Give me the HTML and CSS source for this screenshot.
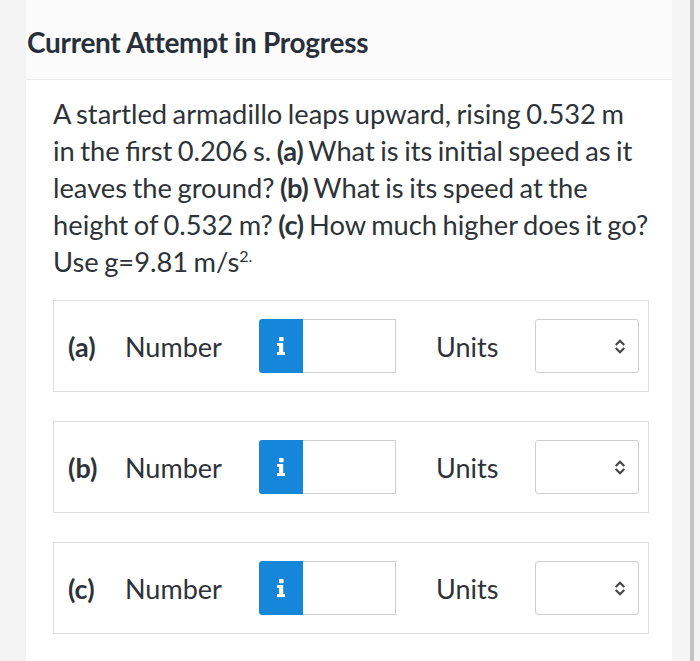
FILE: index.html
```html
<!DOCTYPE html>
<html lang="en">
<head>
<meta charset="utf-8">
<title>Current Attempt in Progress</title>
<link rel="stylesheet" href="styles.css">
</head>
<body>
<div class="page">
  <div class="gutter-left"></div>
  <main class="panel">
    <header class="header">
      <h1 class="title">Current Attempt in Progress</h1>
    </header>
    <section class="body">
      <p class="question">A startled armadillo leaps upward, rising 0.532 m<br>in the first 0.206 s. <b>(a)</b> What is its initial speed as it<br>leaves the ground? <b>(b)</b> What is its speed at the<br>height of 0.532 m? <b>(c)</b> How much higher does it go?<br>Use <span class="var">g</span>=9.81 m/s<sup class="sup">2.</sup></p>

      <div class="answer">
        <span class="part">(a)</span>
        <span class="num-label">Number</span>
        <div class="field">
          <span class="info"><svg class="info-icon" viewBox="0 0 10 18" width="10" height="18"><rect x="3" y="0" width="4.6" height="4.2" rx="1" fill="#fff"/><path d="M1 6H7.2V15H9V18H1V15H3V9H1Z" fill="#fff"/></svg></span>
          <span class="num-input"></span>
        </div>
        <span class="units-label">Units</span>
        <span class="select"><svg class="chev" viewBox="0 0 14 18" width="14" height="17"><polyline points="2.5,7.5 7,3 11.5,7.5" fill="none" stroke="#444" stroke-width="2.2"/><polyline points="2.5,10.5 7,15 11.5,10.5" fill="none" stroke="#444" stroke-width="2.2"/></svg></span>
      </div>

      <div class="answer">
        <span class="part">(b)</span>
        <span class="num-label">Number</span>
        <div class="field">
          <span class="info"><svg class="info-icon" viewBox="0 0 10 18" width="10" height="18"><rect x="3" y="0" width="4.6" height="4.2" rx="1" fill="#fff"/><path d="M1 6H7.2V15H9V18H1V15H3V9H1Z" fill="#fff"/></svg></span>
          <span class="num-input"></span>
        </div>
        <span class="units-label">Units</span>
        <span class="select"><svg class="chev" viewBox="0 0 14 18" width="14" height="17"><polyline points="2.5,7.5 7,3 11.5,7.5" fill="none" stroke="#444" stroke-width="2.2"/><polyline points="2.5,10.5 7,15 11.5,10.5" fill="none" stroke="#444" stroke-width="2.2"/></svg></span>
      </div>

      <div class="answer">
        <span class="part">(c)</span>
        <span class="num-label">Number</span>
        <div class="field">
          <span class="info"><svg class="info-icon" viewBox="0 0 10 18" width="10" height="18"><rect x="3" y="0" width="4.6" height="4.2" rx="1" fill="#fff"/><path d="M1 6H7.2V15H9V18H1V15H3V9H1Z" fill="#fff"/></svg></span>
          <span class="num-input"></span>
        </div>
        <span class="units-label">Units</span>
        <span class="select"><svg class="chev" viewBox="0 0 14 18" width="14" height="17"><polyline points="2.5,7.5 7,3 11.5,7.5" fill="none" stroke="#444" stroke-width="2.2"/><polyline points="2.5,10.5 7,15 11.5,10.5" fill="none" stroke="#444" stroke-width="2.2"/></svg></span>
      </div>
    </section>
  </main>
  <div class="gutter-right"></div>
  <div class="scrollbar"></div>
  <div class="edge"></div>
</div>
</body>
</html>
```
FILE: styles.css
```css
* { box-sizing: border-box; }
html, body { margin: 0; padding: 0; }
body {
  font-family: Lato, "Open Sans", Arial, sans-serif;
  color: #2d3338;
  background: #f3f3f3;
}
.page {
  display: flex;
  height: 661px;
  overflow: hidden;
}
.gutter-left { width: 26px; flex: none; background: #f3f3f3; }
.panel {
  width: 646px;
  flex: none;
  background: #fff;
}
.gutter-right { width: 18px; flex: none; background: #f5f5f5; }
.scrollbar { width: 4px; flex: none; background: #c4c4c4; }
.edge { flex: 1; background: #f3f3f3; }

.header {
  height: 80px;
  background: #fbfbfb;
  border-bottom: 1px solid #ebebeb;
  padding: 25px 0 0 1px;
}
.title {
  margin: 0;
  font-size: 28px;
  font-weight: 700;
  line-height: 34px;
  color: #27303a;
  letter-spacing: -0.3px;
}
.body {
  padding: 15px 0 0 27px;
}
.question {
  margin: 0;
  width: 610px;
  font-size: 27.3px;
  line-height: 37px;
  word-spacing: -1.5px;
  color: #2d3338;
  white-space: nowrap;
}
.question b { font-weight: 700; letter-spacing: -0.5px; }
.sup { font-size: 16px; vertical-align: super; line-height: 1; }

.answer {
  display: flex;
  align-items: center;
  width: 596px;
  height: 92px;
  margin-top: 20px;
  border: 1px solid #dedede;
  padding: 0 8px 0 14px;
  font-size: 27px;
}
.answer + .answer { margin-top: 29px; }
.part { width: 57px; flex: none; font-weight: 700; }
.num-label { width: 134px; flex: none; }
.field { display: flex; height: 54px; flex: none; }
.info {
  width: 44px;
  background: #1686db;
  border-radius: 3px 0 0 3px;
  display: flex;
  align-items: center;
  justify-content: center;
}
.num-input {
  width: 93px;
  border: 1px solid #cfcfcf;
  border-left: none;
  background: #fff;
}
.units-label { margin-left: 40px; width: 99px; flex: none; }
.select {
  width: 104px;
  height: 54px;
  border: 1px solid #cfcfcf;
  border-radius: 3px;
  display: flex;
  align-items: center;
  justify-content: flex-end;
  padding-right: 11px;
}
```
